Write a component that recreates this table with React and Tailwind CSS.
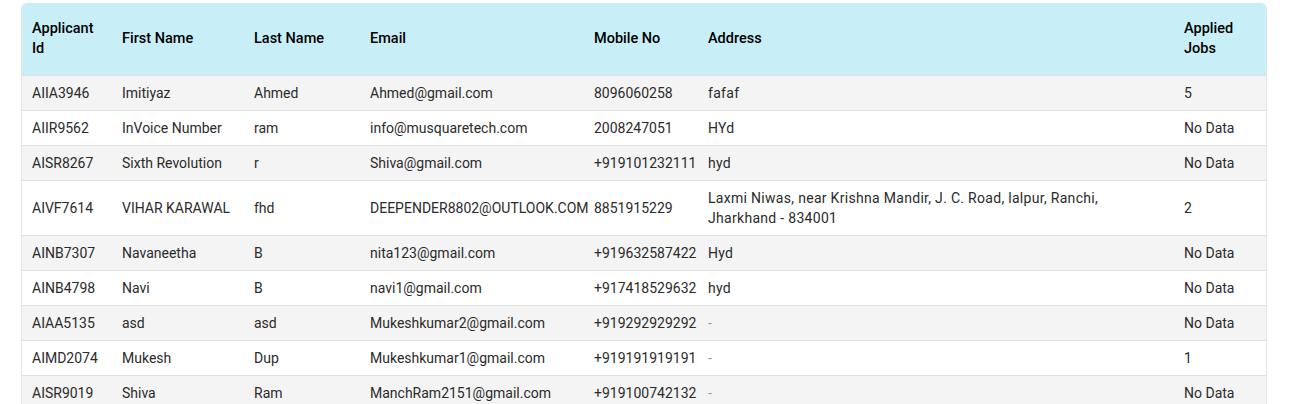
import React from 'react';

const COLUMNS = [
    { key: 'id', label: 'Applicant Id', width: 'w-[90px]' },
    { key: 'first', label: 'First Name', width: 'w-[132px]' },
    { key: 'last', label: 'Last Name', width: 'w-[116px]' },
    { key: 'email', label: 'Email', width: 'w-[224px]' },
    { key: 'mobile', label: 'Mobile No', width: 'w-[114px]' },
    { key: 'address', label: 'Address', width: 'w-[476px]' },
    { key: 'jobs', label: 'Applied Jobs', width: 'w-[94px]' }
];

const APPLICANTS = [
    { id: 'AIIA3946', first: 'Imitiyaz', last: 'Ahmed', email: 'Ahmed@gmail.com', mobile: '8096060258', address: 'fafaf', jobs: '5' },
    { id: 'AIIR9562', first: 'InVoice Number', last: 'ram', email: 'info@musquaretech.com', mobile: '2008247051', address: 'HYd', jobs: 'No Data' },
    { id: 'AISR8267', first: 'Sixth Revolution', last: 'r', email: 'Shiva@gmail.com', mobile: '+919101232111', address: 'hyd', jobs: 'No Data' },
    { id: 'AIVF7614', first: 'VIHAR KARAWAL', last: 'fhd', email: 'DEEPENDER8802@OUTLOOK.COM', mobile: '8851915229', address: 'Laxmi Niwas, near Krishna Mandir, J. C. Road, lalpur, Ranchi, Jharkhand - 834001', jobs: '2' },
    { id: 'AINB7307', first: 'Navaneetha', last: 'B', email: 'nita123@gmail.com', mobile: '+919632587422', address: 'Hyd', jobs: 'No Data' },
    { id: 'AINB4798', first: 'Navi', last: 'B', email: 'navi1@gmail.com', mobile: '+917418529632', address: 'hyd', jobs: 'No Data' },
    { id: 'AIAA5135', first: 'asd', last: 'asd', email: 'Mukeshkumar2@gmail.com', mobile: '+919292929292', address: '-', jobs: 'No Data' },
    { id: 'AIMD2074', first: 'Mukesh', last: 'Dup', email: 'Mukeshkumar1@gmail.com', mobile: '+919191919191', address: '-', jobs: '1' },
    { id: 'AISR9019', first: 'Shiva', last: 'Ram', email: 'ManchRam2151@gmail.com', mobile: '+919100742132', address: '-', jobs: 'No Data' }
];

export default function App() {
    return (
        <div className="h-[404px] overflow-hidden bg-white pl-[21px] pr-[42px] pt-[3px] font-['Roboto',sans-serif]">
            <div className="overflow-hidden rounded-t-md border-x border-[#e3e3e3]">
                <table className="w-full table-fixed border-collapse text-left text-[14px]">
                    <colgroup>
                        {COLUMNS.map(col => (
                            <col key={col.key} className={col.width} />
                        ))}
                    </colgroup>
                    <thead className="bg-[#c8eff7]">
                        <tr>
                            {COLUMNS.map(col => (
                                <th key={col.key} className="px-[10px] py-4 align-middle text-[14.5px] font-medium leading-5 text-black">
                                    {col.label}
                                </th>
                            ))}
                        </tr>
                    </thead>
                    <tbody>
                        {APPLICANTS.map((row, i) => (
                            <tr
                                key={row.id}
                                className={`border-t border-[#e0e0e0] ${i % 2 === 0 ? 'bg-[#f4f4f4]' : 'bg-white'}`}
                            >
                                {COLUMNS.map(col => (
                                    <td
                                        key={col.key}
                                        className={`px-[10px] py-[7px] align-middle leading-5 ${
                                            row[col.key] === '-' ? 'text-[#9a9a9a]' : 'text-[#2b2b2b]'
                                        } ${col.key === 'address' ? 'tracking-[0.3px]' : ''}`}
                                    >
                                        {col.key === 'address' ? (
                                            <div className="max-w-[410px]">{row[col.key]}</div>
                                        ) : (
                                            row[col.key]
                                        )}
                                    </td>
                                ))}
                            </tr>
                        ))}
                    </tbody>
                </table>
            </div>
        </div>
    );
}
